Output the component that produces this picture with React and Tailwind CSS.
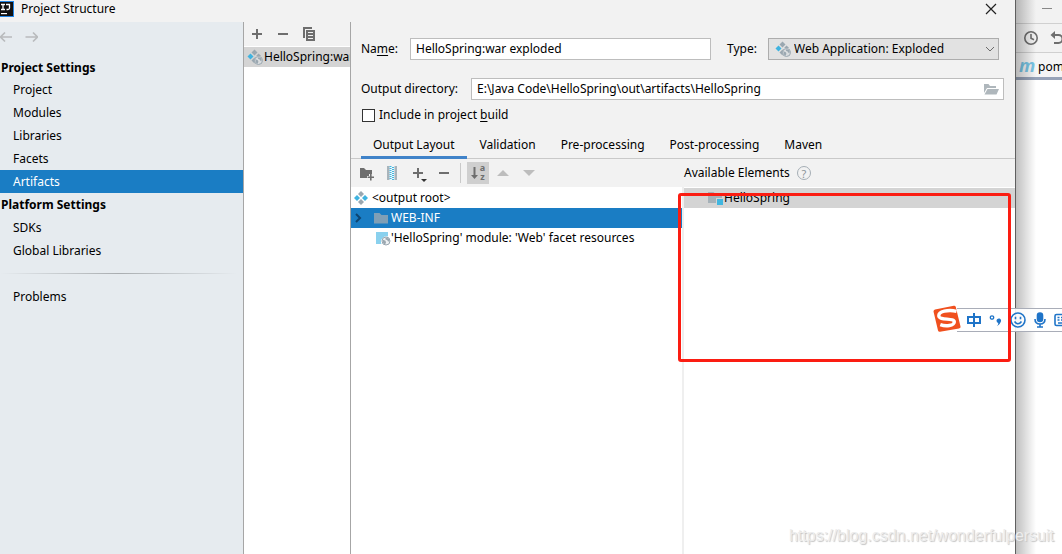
import React from "react";

function ExplodedIcon({ className = "" }) {
  return (
    <svg className={`h-4 w-4 shrink-0 ${className}`} viewBox="0 0 16 16" aria-hidden="true">
      <path d="M7.5 .5l3 3-3 3-3-3z" fill="#9aa7b0" />
      <path d="M3.5 4.5l3 3-3 3-3-3z" fill="#3fb3e0" />
      <path d="M7.5 8.5l1.6 1.6-1.6 4.4-3-3z" fill="#9aa7b0" />
      <path d="M11.5 4.5l2.6 2.4h-4.4l-.6.2z" fill="#9aa7b0" />
      <circle cx="11.5" cy="11.5" r="4" fill="#d9dcde" stroke="#9aa7b0" strokeWidth="1" />
      <path d="M8.4 10.2l2.4 1 .6 1.6-.8 2-1.800-1.400zM11 8.200l3 .8 1 2.600-1.400.4-1-1.600-1.600-.6z" fill="#9aa7b0" />
    </svg>
  );
}

function RootIcon() {
  return (
    <svg className="h-4 w-4 shrink-0" viewBox="0 0 16 16" aria-hidden="true">
      <path d="M8 1l3 3-3 3-3-3z" fill="#9aa7b0" />
      <path d="M4 5l3 3-3 3-3-3z" fill="#3fb3e0" />
      <path d="M12 5l3 3-3 3-3-3z" fill="#3fb3e0" />
      <path d="M8 9l3 3-3 3-3-3z" fill="#9aa7b0" />
    </svg>
  );
}

function FacetIcon() {
  return (
    <svg className="h-4 w-4 shrink-0" viewBox="0 0 16 16" aria-hidden="true">
      <path d="M1 2h12v4.500a5.500 5.500 0 0 0-6.500 7.500H1z" fill="#8ad1ee" />
      <circle cx="11" cy="11" r="4" fill="#eef1f3" stroke="#9aa7b0" strokeWidth="1" />
      <path d="M7.500 9.500l3 1.200.5 1.800-1 2.200-1.800-1.600zM10.500 7.500l3.200.9 1 2.800-1.600.4-1-1.600-1.600-.6z" fill="#9aa7b0" />
    </svg>
  );
}

function FolderIcon() {
  return (
    <svg className="h-4 w-4 shrink-0" viewBox="0 0 16 16" aria-hidden="true">
      <path d="M1 3h5.500l2 2H15v8.500H1z" fill="#7f9fb6" />
    </svg>
  );
}

function ModuleIcon() {
  return (
    <svg className="h-4 w-4 shrink-0" viewBox="0 0 16 16" aria-hidden="true">
      <path d="M1 2h5.500l2 2H15v4H9v5H1z" fill="#a5b1b8" />
      <path d="M10 9h6v6h-6z" fill="#40b6e0" />
    </svg>
  );
}

function PlusIcon() {
  return (
    <svg className="h-4 w-4" viewBox="0 0 16 16" aria-hidden="true">
      <path d="M7 3h2v4h4v2H9v4H7V9H3V7h4z" fill="#6e6e6e" />
    </svg>
  );
}

function MinusIcon() {
  return (
    <svg className="h-4 w-4" viewBox="0 0 16 16" aria-hidden="true">
      <path d="M3 7h10v2H3z" fill="#6e6e6e" />
    </svg>
  );
}

function NavItem({ children, selected }) {
  return (
    <button
      type="button"
      className={`block h-[23px] w-full pl-[13px] text-left ${selected ? "bg-[#1a7dc4] text-white" : ""}`}
    >
      {children}
    </button>
  );
}

function Sidebar() {
  return (
    <nav className="w-[244px] shrink-0 border-r border-[#a6a6a6] bg-[#e6ebef]">
      <div className="flex h-[34px] items-center gap-2.5">
        <button type="button" aria-label="Back" className="-ml-1 mb-1">
          <svg className="h-4 w-4" viewBox="0 0 16 16" fill="none" stroke="#b9bbbd" strokeWidth="1.700" aria-hidden="true">
            <path d="M16 8H4.500M9 3.500L4.500 8 9 12.500" />
          </svg>
        </button>
        <button type="button" aria-label="Forward" className="mb-1">
          <svg className="h-4 w-4" viewBox="0 0 16 16" fill="none" stroke="#b9bbbd" strokeWidth="1.700" aria-hidden="true">
            <path d="M3.500 8H16M11 3.500L15.500 8 11 12.500" />
          </svg>
        </button>
      </div>
      <h2 className="h-[22px] pl-px font-bold leading-6">Project Settings</h2>
      <NavItem>Project</NavItem>
      <NavItem>Modules</NavItem>
      <NavItem>Libraries</NavItem>
      <NavItem>Facets</NavItem>
      <NavItem selected>Artifacts</NavItem>
      <h2 className="h-[23px] pl-px font-bold leading-6">Platform Settings</h2>
      <NavItem>SDKs</NavItem>
      <NavItem>Global Libraries</NavItem>
      <div className="my-[11px] mr-1.5 h-px bg-linear-to-r from-transparent via-[#a9adb0] to-transparent" />
      <NavItem>Problems</NavItem>
    </nav>
  );
}

function ArtifactList() {
  return (
    <section className="w-[107px] shrink-0 overflow-hidden border-r border-[#a6a6a6] bg-white">
      <div className="flex h-6 items-center gap-2.5 bg-[#f2f2f2] pl-[5px]">
        <button type="button" aria-label="Add"><PlusIcon /></button>
        <button type="button" aria-label="Remove"><MinusIcon /></button>
        <button type="button" aria-label="Copy">
          <svg className="h-4 w-4" viewBox="0 0 16 16" aria-hidden="true">
            <path d="M2 1h9v2H4v9H2z" fill="#6e6e6e" />
            <path d="M5 4h9v11H5z" fill="#6e6e6e" />
            <path d="M7 6.500h5M7 9.500h5M7 12.500h5" stroke="#f2f2f2" />
          </svg>
        </button>
      </div>
      <button type="button" className="mt-px flex h-5 w-full items-center gap-px bg-[#d4d4d4] pl-[3px] whitespace-nowrap">
        <ExplodedIcon />
        HelloSpring:war
      </button>
    </section>
  );
}

function Tab({ children, active }) {
  return (
    <button
      type="button"
      role="tab"
      aria-selected={active ? "true" : "false"}
      className={`h-[27px] border-b-3 px-3 pt-0.5 whitespace-nowrap ${active ? "border-[#4083c9]" : "border-transparent"}`}
    >
      {children}
    </button>
  );
}

function Toolbar() {
  return (
    <div className="flex h-7 items-center gap-2.5 pl-[7px]">
      <button type="button" aria-label="New folder">
        <svg className="h-4 w-4" viewBox="0 0 16 16" aria-hidden="true">
          <path d="M2 3h4l2 2h6v4h-3v2H9v2H2z" fill="#6e6e6e" />
          <path d="M12 9h1.600v2.400H16V13h-2.400v2.400H12V13H9.600v-1.600H12z" fill="#6e6e6e" />
        </svg>
      </button>
      <button type="button" aria-label="New archive">
        <svg className="h-4 w-4" viewBox="0 0 16 16" aria-hidden="true">
          <path d="M3 1h10v14H3z" fill="#a9b4bb" />
          <path d="M5.500 1h5v14h-5z" fill="#f0f7fa" />
          <path d="M6.500 1v14M9 2v13" stroke="#40b6e0" strokeWidth="2" strokeDasharray="1 1" />
        </svg>
      </button>
      <button type="button" aria-label="Add copy of" className="relative">
        <PlusIcon />
        <svg className="absolute -right-0.5 -bottom-0.5 h-1 w-[7px]" viewBox="0 0 7 4" aria-hidden="true">
          <path d="M0 0h6L3 3z" fill="#333" />
        </svg>
      </button>
      <button type="button" aria-label="Remove element"><MinusIcon /></button>
      <span className="-ml-0.5 h-5 w-px bg-[#c9c9c9]" />
      <button type="button" aria-label="Sort by name" className="-ml-1 flex h-[22px] w-[22px] items-center justify-center gap-0.5 bg-[#cfcfcf]">
        <svg className="h-4 w-[7px]" viewBox="0 0 7 16" aria-hidden="true">
          <path d="M2.500 2h2v8H7l-3.500 4L0 10h2.500z" fill="#6e6e6e" />
        </svg>
        <span className="flex flex-col pb-0.5 text-[9px] font-bold leading-[9px] text-[#6e6e6e]">
          <span>a</span>
          <span>z</span>
        </span>
      </button>
      <button type="button" aria-label="Move up" className="-ml-1">
        <svg className="h-4 w-4" viewBox="0 0 16 16" aria-hidden="true"><path d="M2 11h12L8 5z" fill="#bdbdbd" /></svg>
      </button>
      <button type="button" aria-label="Move down">
        <svg className="h-4 w-4" viewBox="0 0 16 16" aria-hidden="true"><path d="M2 5h12l-6 6z" fill="#bdbdbd" /></svg>
      </button>
    </div>
  );
}

function OutputPane() {
  return (
    <section className="flex min-w-0 flex-1 flex-col">
      <Toolbar />
      <ul role="tree" className="flex-1 bg-white pt-px">
        <li role="treeitem" className="flex h-5 items-center gap-[3px] pl-0.5">
          <RootIcon />
          &lt;output root&gt;
        </li>
        <li role="treeitem" aria-selected="true" className="flex h-5 items-center gap-0.5 bg-[#1a7dc4] pl-1 text-white">
          <svg className="mr-2 h-3 w-2 shrink-0" viewBox="0 0 8 12" fill="none" stroke="#0d4470" strokeWidth="2" aria-hidden="true">
            <path d="M1 2l4 4-4 4" />
          </svg>
          <FolderIcon />
          WEB-INF
        </li>
        <li role="treeitem" className="flex h-5 items-center pl-6 whitespace-nowrap">
          <FacetIcon />
          'HelloSpring' module: 'Web' facet resources
        </li>
      </ul>
    </section>
  );
}

function AvailablePane() {
  return (
    <section className="flex min-w-0 flex-1 flex-col">
      <div className="flex h-7 items-center gap-[7px]">
        Available Elements
        <button type="button" aria-label="Help" className="flex h-3.5 w-3.5 items-center justify-center rounded-full border border-[#a5aeb5] text-[11px] leading-none text-[#8b949a]">
          ?
        </button>
      </div>
      <div className="relative flex-1 bg-white pt-px">
        <ul role="tree">
          <li role="treeitem" className="flex h-5 items-center gap-px bg-[#d4d4d4] pl-[23px]">
            <ModuleIcon />
            HelloSpring
          </li>
        </ul>
        <div className="pointer-events-none absolute top-1.5 right-1 -left-1.5 z-20 h-[169px] rounded-[3px] border-3 border-[#fb1d12]" />
      </div>
    </section>
  );
}

function ArtifactEditor() {
  return (
    <main className="flex min-w-0 flex-1 flex-col">
      <form className="pt-4 pl-2.5" onSubmit={(e) => e.preventDefault()}>
        <div className="mr-4 flex items-center">
          <label htmlFor="name" className="w-[49px] shrink-0">
            Na<u className="underline-offset-2">m</u>e:
          </label>
          <input
            id="name"
            defaultValue="HelloSpring:war exploded"
            className="h-[22px] min-w-0 flex-1 border border-[#bdbdbd] bg-white px-[5px] pb-0.5 outline-none"
          />
          <label htmlFor="type" className="ml-4 w-[41px] shrink-0">Type:</label>
          <div className="relative w-[231px] shrink-0">
            <ExplodedIcon className="pointer-events-none absolute top-[3px] left-[7px]" />
            <select
              id="type"
              defaultValue="exploded"
              className="block h-[22px] w-full appearance-none border border-[#adadad] bg-[#e2e2e2] pl-[25px] outline-none"
            >
              <option value="exploded">Web Application: Exploded</option>
            </select>
            <svg className="pointer-events-none absolute top-2 right-1 h-1.5 w-2.5" viewBox="0 0 10 6" fill="none" stroke="#6b6b6b" aria-hidden="true">
              <path d="M1 1l4 4 4-4" />
            </svg>
          </div>
        </div>
        <div className="mt-[18px] mr-[11px] flex items-center">
          <label htmlFor="directory" className="w-[110px] shrink-0">Output directory:</label>
          <div className="relative min-w-0 flex-1">
            <input
              id="directory"
              defaultValue="E:\Java Code\HelloSpring\out\artifacts\HelloSpring"
              className="block h-[22px] w-full border border-[#bdbdbd] bg-white pr-6 pb-0.5 pl-[5px] outline-none"
            />
            <button type="button" aria-label="Browse" className="absolute top-[3px] right-[5px]">
              <svg className="h-4 w-4" viewBox="0 0 16 16" aria-hidden="true">
                <path d="M1 3h4.500l1.500 2h6v2H4l-3 5z" fill="#afb7bc" />
                <path d="M4.500 8H16l-2.500 5.500H1.500z" fill="#afb7bc" />
              </svg>
            </button>
          </div>
        </div>
        <label className="mt-[5px] flex h-5 items-center gap-1 pl-px">
          <input type="checkbox" className="h-[13px] w-[13px] appearance-none border border-[#333] bg-white" />
          <span>Include in project <u className="underline-offset-2">b</u>uild</span>
        </label>
      </form>
      <div role="tablist" className="mt-[7px] flex h-[27px] gap-px border-b border-[#c9c9c9] pl-2.5">
        <Tab active>Output Layout</Tab>
        <Tab>Validation</Tab>
        <Tab>Pre-processing</Tab>
        <Tab>Post-processing</Tab>
        <Tab>Maven</Tab>
      </div>
      <div className="flex flex-1">
        <OutputPane />
        <div className="mt-7 w-0.5 shrink-0 bg-[#efefef]" />
        <AvailablePane />
      </div>
    </main>
  );
}

function EditorBehind() {
  return (
    <aside className="relative w-[47px] shrink-0 overflow-hidden border-l border-[#5f5f5f] bg-white">
      <div className="flex h-6 items-center justify-end border-b border-[#d0d0d0] bg-[#f2f2f2] pr-2.5 pb-1.5">
        <span className="h-px w-2.5 bg-[#888]" />
      </div>
      <div className="flex h-[29px] items-center gap-2.5 border-b border-[#d0d0d0] bg-[#f2f2f2] pl-[7px]">
        <svg className="h-4 w-4 shrink-0" viewBox="0 0 16 16" fill="none" stroke="#6e6e6e" strokeWidth="1.600" aria-hidden="true">
          <circle cx="8" cy="8" r="6.200" />
          <path d="M8 4v4.300l3 1.500" />
        </svg>
        <svg className="h-4 w-4 shrink-0" viewBox="0 0 16 16" fill="none" stroke="#6e6e6e" strokeWidth="2" aria-hidden="true">
          <path d="M3 5h6.500a4 4 0 0 1 0 8H5" />
          <path d="M6 1v8L1.500 5z" fill="#6e6e6e" stroke="none" />
        </svg>
      </div>
      <div className="flex h-[27px] items-center gap-1 border-b-3 border-[#97a3b8] bg-[#f5f5f5] pt-1 pl-[3px] whitespace-nowrap">
        <span aria-hidden="true" className="-mt-1 w-[15px] shrink-0 text-lg leading-4 font-bold italic text-[#78c6e6]">m</span>
        pom
      </div>
      <div className="pointer-events-none absolute inset-y-0 left-0 w-5 bg-linear-to-r from-black/25 to-transparent" />
    </aside>
  );
}

function InputMethodBar() {
  return (
    <div className="absolute top-[305px] right-0 z-10 flex items-start overflow-hidden">
      <svg className="z-10 h-7 w-7 shrink-0" viewBox="0 0 28 28" aria-hidden="true">
        <path d="M2 4.500Q.5 5 .5 6.500L5 25.500Q5.500 27 7 26.700L26 23.500Q28 23 27.500 21.500L22.800 2Q22.300.500 20.800.800z" fill="#f0501e" />
        <path d="M23.500 6.300C15 4.300 5.500 6.500 5.800 11c.3 4.600 15.700 1.800 15.500 6-.2 3.800-8.500 4.600-14 2.600" fill="none" stroke="#fff" strokeWidth="3.400" />
      </svg>
      <div className="mt-[3px] -ml-1 flex h-6 w-[105px] items-center gap-1.5 border-y border-[#a9adb8] bg-white/90 pl-[9px] text-[#1f74c8]">
        <svg className="h-4 w-4 shrink-0" viewBox="0 0 16 16" fill="none" stroke="currentColor" strokeWidth="2" aria-hidden="true">
          <path d="M2 5h12v6H2zM8 1v14" />
        </svg>
        <svg className="h-4 w-4 shrink-0" viewBox="0 0 16 16" aria-hidden="true">
          <circle cx="4" cy="5.500" r="1.700" fill="none" stroke="currentColor" strokeWidth="1.300" />
          <path d="M8.500 8.800a2.300 2.300 0 1 1 4.200 1.300Q12 12.700 9 14.200q1.500-1.800 1.300-3.200Q8.600 10.600 8.500 8.800z" fill="currentColor" />
        </svg>
        <svg className="h-4 w-4 shrink-0" viewBox="0 0 16 16" fill="none" stroke="currentColor" strokeWidth="1.600" aria-hidden="true">
          <circle cx="8" cy="8" r="7" />
          <path d="M5.500 4.800v2.400M10.500 4.800v2.400M4.500 9.500q3.500 4.500 7 0" />
        </svg>
        <svg className="h-4 w-4 shrink-0" viewBox="0 0 16 16" fill="none" stroke="currentColor" strokeWidth="1.600" aria-hidden="true">
          <rect x="5.500" y="1" width="5" height="8.500" rx="2.500" fill="currentColor" />
          <path d="M3 7q0 5 5 5t5-5M8 12v3M5 15h6" />
        </svg>
        <svg className="h-4 w-4 shrink-0" viewBox="0 0 16 16" fill="none" stroke="currentColor" strokeWidth="1.600" aria-hidden="true">
          <rect x="1" y="2.500" width="15" height="11" rx="1.500" />
          <path d="M3.500 5.500h2M7 5.500h2M3.500 8h2M7 8h2M4 11h6" />
        </svg>
      </div>
    </div>
  );
}

export default function App() {
  return (
    <div className="relative flex min-h-screen overflow-hidden bg-white font-['Noto_Sans','Open_Sans',sans-serif] text-xs text-black">
      <div className="flex min-w-0 flex-1 flex-col bg-[#f2f2f2]">
        <header className="flex h-[22px] items-center">
          <svg className="mb-1 h-4 w-3.5 shrink-0" viewBox="0 0 14 16" aria-hidden="true">
            <path d="M0 0h14v16H0z" fill="#2186e8" />
            <path d="M0 1h13v14H0z" fill="#111" />
            <path d="M1 3.500h4M3 3.500v5M1 8.500h4M6 3.500h3.500v3.500q0 1.500-1.500 1.500H6.500" fill="none" stroke="#fff" strokeWidth="1.300" />
            <path d="M1 12h6v1.200H1z" fill="#fff" />
          </svg>
          <h1 className="mb-1 ml-[7px] flex-1">Project Structure</h1>
          <button type="button" aria-label="Close" className="mr-[18px] mb-1">
            <svg className="h-3 w-3" viewBox="0 0 12 12" fill="none" stroke="#222" strokeWidth="1.200" aria-hidden="true">
              <path d="M1 1l10 10M11 1L1 11" />
            </svg>
          </button>
        </header>
        <div className="flex flex-1">
          <Sidebar />
          <ArtifactList />
          <ArtifactEditor />
        </div>
      </div>
      <EditorBehind />
      <InputMethodBar />
      <p className="pointer-events-none absolute right-2 bottom-2 font-['Liberation_Sans',sans-serif] text-base leading-5 text-[#ededed] [text-shadow:1px_1px_1px_#c4c4c4]">
        https://blog.csdn.net/wonderfulpersuit
      </p>
    </div>
  );
}
